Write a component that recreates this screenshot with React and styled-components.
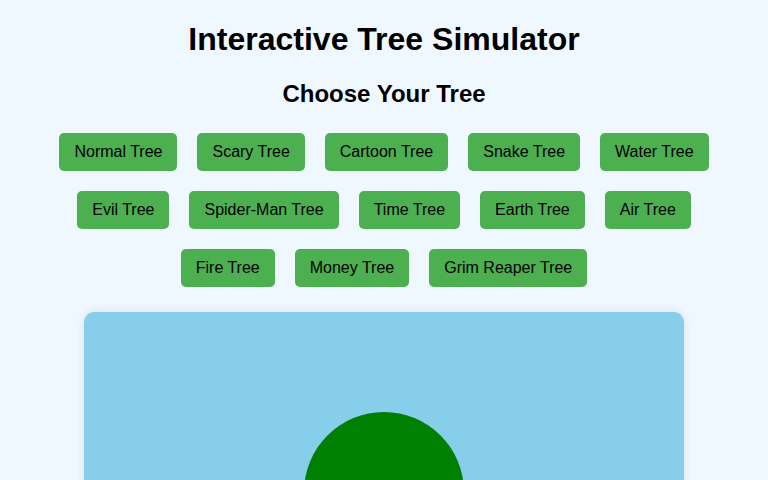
import React, { useState } from "react";
import styled, { createGlobalStyle } from "styled-components";

const GlobalStyle = createGlobalStyle`
  body {
    margin: 0;
    background: #f0f8ff;
    font-family: "Liberation Sans", Arial, sans-serif;
  }
`;

const Page = styled.div`
  display: flex;
  flex-direction: column;
  align-items: center;
  text-align: center;
  padding-top: 21.44px;
`;

const Title = styled.h1`
  font-size: 32px;
  margin: 0 0 21.44px;
`;

const Subtitle = styled.h2`
  font-size: 24px;
  margin: 0 0 15px;
`;

const ButtonGrid = styled.div`
  display: flex;
  flex-wrap: wrap;
  justify-content: center;
  max-width: 720px;
`;

const TreeButton = styled.button`
  margin: 10px;
  padding: 10px 15px;
  font-family: inherit;
  font-size: 16px;
  line-height: 18px;
  color: #000;
  background: ${(p) => (p.$active ? "#45a049" : "#4caf50")};
  border: none;
  border-radius: 5px;
  cursor: pointer;
`;

const Canvas = styled.div`
  position: relative;
  width: 600px;
  height: 400px;
  margin-top: 15px;
  background: #87ceeb;
  border-radius: 10px;
  box-shadow: 0 0 10px rgba(0, 0, 0, 0.1);
  overflow: hidden;
`;

const Crown = styled.div`
  position: absolute;
  left: 220px;
  top: 100px;
  width: 160px;
  height: 160px;
  border-radius: 50%;
  background: ${(p) => p.$color};
  z-index: 1;
`;

const Trunk = styled.div`
  position: absolute;
  left: 280px;
  top: 230px;
  width: 40px;
  height: 170px;
  background: #8b4513;
`;

const trees = [
  "Normal Tree",
  "Scary Tree",
  "Cartoon Tree",
  "Snake Tree",
  "Water Tree",
  "Evil Tree",
  "Spider-Man Tree",
  "Time Tree",
  "Earth Tree",
  "Air Tree",
  "Fire Tree",
  "Money Tree",
  "Grim Reaper Tree",
];

export default function App() {
  const [tree, setTree] = useState("Normal Tree");

  return (
    <>
      <GlobalStyle />
      <Page>
        <Title>Interactive Tree Simulator</Title>
        <Subtitle>Choose Your Tree</Subtitle>
        <ButtonGrid>
          {trees.map((name) => (
            <TreeButton key={name} onClick={() => setTree(name)}>
              {name}
            </TreeButton>
          ))}
        </ButtonGrid>
        <Canvas>
          <Trunk />
          <Crown $color={tree === "Normal Tree" ? "#008000" : "#006400"} />
        </Canvas>
      </Page>
    </>
  );
}
